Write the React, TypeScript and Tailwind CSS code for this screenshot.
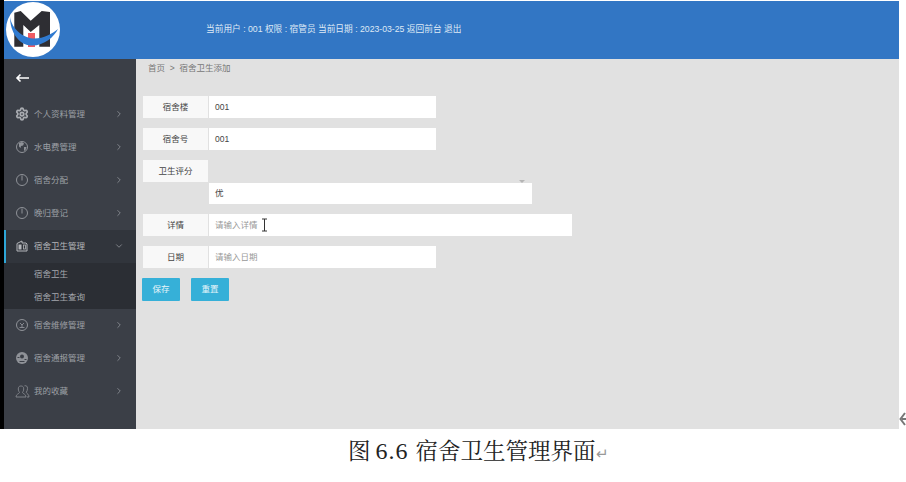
import React from "react";
import { ChevronDown, ChevronRight, Settings } from "lucide-react";

const FONT = "font-['Liberation_Sans','Noto_Sans_CJK_SC',sans-serif]";

function Power() {
	return (
		<svg width="14" height="14" viewBox="0 0 14 14" fill="none" stroke="#8f9298" strokeWidth="1">
			<circle cx="7" cy="7" r="5.5" />
			<path d="M7 2.5V7.5" />
		</svg>
	);
}

function Globe() {
	return (
		<svg width="14" height="14" viewBox="0 0 14 14">
			<circle cx="7" cy="7" r="5.5" fill="none" stroke="#8f9298" />
			<path d="M4 3l3-1 2 1.500-1 2-2 .5-.5 2-1.500-1.500zM9 7l2.500 0-1 3-1.500 1z" fill="#8f9298" />
		</svg>
	);
}

function Book() {
	return (
		<svg width="14" height="14" viewBox="0 0 14 14">
			<path d="M2 4.500l5-2.500v2h4l1 1v7H2z" fill="none" stroke="#b4b6ba" />
			<rect x="3.500" y="5.500" width="3" height="5" fill="#b4b6ba" />
			<rect x="8.500" y="6" width="2" height="4" fill="none" stroke="#b4b6ba" strokeWidth=".8" />
		</svg>
	);
}

function Repair() {
	return (
		<svg width="14" height="14" viewBox="0 0 14 14" fill="none" stroke="#8f9298">
			<circle cx="7" cy="7" r="5.500" />
			<path d="M5 5l2 2 2-2M4.500 9.500h5M7 7v2.500" strokeWidth=".9" />
		</svg>
	);
}

function Notice() {
	return (
		<svg width="14" height="14" viewBox="0 0 14 14">
			<circle cx="7" cy="7" r="6" fill="#8f9298" />
			<circle cx="7" cy="5.500" r="2" fill="#3b3f47" />
			<path d="M2.500 6.500h2M9.500 8.500h2M4.500 10.500h5" stroke="#3b3f47" />
		</svg>
	);
}

function Users() {
	return (
		<svg width="15" height="14" viewBox="0 0 15 14" fill="none" stroke="#7f8288">
			<path d="M1 13c0-3 3-3 3.500-4.500C3.500 7 3 5.500 3.500 3.500 4 1.500 8 1.500 8.500 3.500c.5 2 0 3.500-1 5C8 10 11 10 11 13z" />
			<path d="M9.500 1.800c2-.5 3 .7 3 2.500 0 1.500-.5 3-1.200 4C11.800 10 14 10 14 13h-2" />
		</svg>
	);
}

function Logo() {
	return (
		<svg width="54" height="55" viewBox="0 0 54 55" className="absolute left-[2px] top-px">
			<ellipse cx="27" cy="27.500" rx="27" ry="27.500" fill="#fff" />
			<path d="M8.300 10.700L14.700 9 24.700 18.700 35.700 9 44 10 44 44.700 33.300 44.700 33.300 23 24.700 30 17.300 23 17.300 44.700 8.300 44.700z" fill="#2e2e33" />
			<rect x="22" y="31" width="7" height="14" fill="#ef5b64" />
			<path d="M4 14.700C5 24 14 35 27 36.500 37 37 46 32 52 27 48 35 38 44 25 43.500 13 43 4 30 4 14.700z" fill="#2f7ad0" />
		</svg>
	);
}

function MenuItem({ icon, label }: { icon: React.ReactNode; label: string }) {
	return (
		<div className="flex h-[33px] items-center pl-[11px] pr-[12px] text-[8.500px] text-[#9da0a6]">
			<span className="flex w-[19px] shrink-0">{icon}</span>
			<span className="flex-1">{label}</span>
			<ChevronRight size={10} strokeWidth={2} color="#8d9096" />
		</div>
	);
}

function Field({
	label,
	value,
	placeholder,
	width,
	cursor,
}: {
	label: string;
	value?: string;
	placeholder?: string;
	width: string;
	cursor?: boolean;
}) {
	return (
		<div className="flex h-[22px] gap-px">
			<div className="flex w-[65px] items-center justify-center bg-[#f8f8f8] text-[8.500px] text-[#444]">{label}</div>
			<div className={`flex items-center bg-white pl-[6px] text-[8.500px] ${width} ${value ? "text-[#444]" : "text-[#999]"}`}>
				{value ?? placeholder}
				{cursor && (
					<svg width="7" height="14" viewBox="0 0 7 14" fill="none" stroke="#333" className="ml-[3px]">
						<path d="M1 1h5M3.500 1v12M1 13h5" />
					</svg>
				)}
			</div>
		</div>
	);
}

export default function App() {
	return (
		<div className={`${FONT} relative h-[482px] w-[906px] overflow-hidden bg-white`}>
			<div className="flex h-[429px] w-[899px] border-l-[4px] border-black pt-px">
				<div className="relative flex min-w-0 flex-1 flex-col">
					<header className="relative h-[58px] shrink-0 bg-[#3276c4]">
						<Logo />
						<p className="pl-[202px] pt-[22px] text-[8.700px] leading-[13px] text-[#dfe9f5]">
							当前用户 : 001 权限 : 宿管员 当前日期 : 2023-03-25 返回前台 退出
						</p>
					</header>
					<div className="flex min-h-0 flex-1">
						<aside className="w-[132px] shrink-0 bg-[#3b3f47]">
							<div className="flex h-[38.500px] items-center pl-[11px]">
								<svg width="15" height="10" viewBox="0 0 15 10" fill="none" stroke="#fff" strokeWidth="1.600">
									<path d="M14 5H2M5.500 1.500L2 5l3.500 3.500" />
								</svg>
							</div>
							<MenuItem icon={<Settings size={14} color="#a9acb1" strokeWidth={3} />} label="个人资料管理" />
							<MenuItem icon={<Globe />} label="水电费管理" />
							<MenuItem icon={<Power />} label="宿舍分配" />
							<MenuItem icon={<Power />} label="晚归登记" />
							<div className="flex h-[33px] items-center border-l-2 border-[#2ea7d8] bg-[#31353c] pl-[9px] pr-[12px] text-[8.500px] text-[#b4b6ba]">
								<span className="flex w-[19px] shrink-0">
									<Book />
								</span>
								<span className="flex-1">宿舍卫生管理</span>
								<ChevronDown size={10} strokeWidth={2} color="#8d9096" />
							</div>
							<div className="flex h-[46px] flex-col justify-center gap-[11px] bg-[#2b2e34] pl-[30px] text-[8.500px] leading-[12px] text-[#a5a8ae]">
								<span>宿舍卫生</span>
								<span>宿舍卫生查询</span>
							</div>
							<MenuItem icon={<Repair />} label="宿舍维修管理" />
							<MenuItem icon={<Notice />} label="宿舍通报管理" />
							<MenuItem icon={<Users />} label="我的收藏" />
						</aside>
						<main className="relative min-w-0 flex-1 bg-[#e1e1e1] pl-[6px] pt-[3px]">
							<p className="pl-[6px] text-[8.500px] leading-[12px] text-[#777]">首页 &nbsp;&gt;&nbsp; 宿舍卫生添加</p>
							<div className="ml-px mt-[22px] flex flex-col gap-[10px]">
								<Field label="宿舍楼" value="001" width="w-[227px]" />
								<Field label="宿舍号" value="001" width="w-[227px]" />
								<div>
									<div className="flex h-[22px] w-[65px] items-center justify-center bg-[#f8f8f8] text-[8.500px] text-[#444]">卫生评分</div>
									<div className="relative ml-[66px] mt-px flex h-[21px] w-[323px] items-center bg-white pl-[6px] text-[8.500px] text-[#444]">
										优
										<svg width="6" height="3" viewBox="0 0 6 3" className="absolute right-[7px] top-[-3px]">
											<path d="M0 0h6L3 3z" fill="#b5b5b5" />
										</svg>
									</div>
								</div>
								<Field label="详情" placeholder="请输入详情" width="w-[363px]" cursor />
								<Field label="日期" placeholder="请输入日期" width="w-[227px]" />
							</div>
							<div className="mt-[10px] flex gap-[11px]">
								<button className="h-[23px] w-[38px] rounded-[1px] bg-[#36b0d8] text-[8.500px] text-[#e6f5fa]">保存</button>
								<button className="h-[23px] w-[38px] rounded-[1px] bg-[#36b0d8] text-[8.500px] text-[#e6f5fa]">重置</button>
							</div>
						</main>
					</div>
				</div>
			</div>
			<svg width="7" height="16" viewBox="0 0 7 16" fill="none" stroke="#777" strokeWidth="2" className="absolute left-[899px] top-[411px]">
				<path d="M6 2L1.500 8 6 14M3 8h4" />
			</svg>
			<p className="flex h-[53px] items-baseline pl-[348px] pt-[9px] font-['Liberation_Serif','Noto_Serif_CJK_SC','Noto_Sans_CJK_SC',serif] text-[22.500px] leading-[26px] text-[#222]">
				<span>图</span>
				<span className="ml-[5px] text-[24px] tracking-[1px]">6.6</span>
				<span className="ml-[7px]">宿舍卫生管理界面</span>
				<span className="text-[15px] text-[#999]">↵</span>
			</p>
		</div>
	);
}
